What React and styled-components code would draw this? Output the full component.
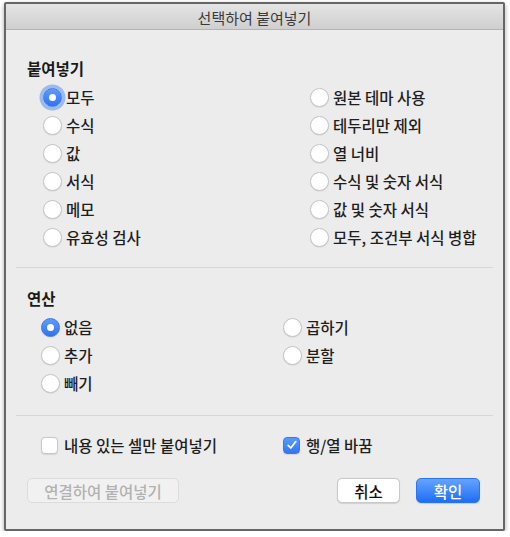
import React from 'react';
import styled, { createGlobalStyle, css } from 'styled-components';

const Global = createGlobalStyle`
  html, body {
    margin: 0;
    padding: 0;
    background: #ffffff;
  }
  body {
    font-family: "Noto Sans CJK KR", "Noto Sans", sans-serif;
    color: #222;
  }
`;

const pasteLeft = ['모두', '수식', '값', '서식', '메모', '유효성 검사'];
const pasteRight = ['원본 테마 사용', '테두리만 제외', '열 너비', '수식 및 숫자 서식', '값 및 숫자 서식', '모두, 조건부 서식 병합'];

const Radio = ({ label, checked, focused }) => (
  <Option>
    <Circle $checked={checked} $focused={focused} />
    <Label>{label}</Label>
  </Option>
);

const Check = ({ label, checked }) => (
  <Option>
    <Box $checked={checked}>
      {checked && (
        <svg width="12" height="12" viewBox="0 0 12 12">
          <path d="M2.2 6.4 L4.8 9 L9.8 2.6" fill="none" stroke="#fff" strokeWidth="1.7" strokeLinecap="round" strokeLinejoin="round" />
        </svg>
      )}
    </Box>
    <Label>{label}</Label>
  </Option>
);

const App = () => {
  return (
    <>
      <Global />
      <Window>
        <TitleBar>선택하여 붙여넣기</TitleBar>
        <Body>
          <Section $top={28} $bottom={16}>
            <Heading>붙여넣기</Heading>
            <Grid $indent={16} $col={267}>
              <Column>
                {pasteLeft.map((l, i) => (
                  <Radio key={l} label={l} checked={i === 0} focused={i === 0} />
                ))}
              </Column>
              <Column>
                {pasteRight.map((l) => (
                  <Radio key={l} label={l} />
                ))}
              </Column>
            </Grid>
          </Section>
          <Divider />
          <Section $top={20} $bottom={18}>
            <Heading>연산</Heading>
            <Grid $indent={14} $col={242}>
              <Column>
                <Radio label="없음" checked />
                <Radio label="추가" />
                <Radio label="빼기" />
              </Column>
              <Column>
                <Radio label="곱하기" />
                <Radio label="분할" />
              </Column>
            </Grid>
          </Section>
          <Divider />
          <Section $top={15} $bottom={0}>
            <Grid $indent={14} $col={242} $flat>
              <Check label="내용 있는 셀만 붙여넣기" />
              <Check label="행/열 바꿈" checked />
            </Grid>
          </Section>
          <Buttons>
            <Button $kind="disabled">연결하여 붙여넣기</Button>
            <Spacer />
            <Button $kind="plain" $w={63}>취소</Button>
            <Button $kind="primary" $w={64}>확인</Button>
          </Buttons>
        </Body>
      </Window>
    </>
  );
};

export default App;

const Window = styled.div`
  margin: 2px 0 0 4px;
  width: 501px;
  height: 529px;
  box-sizing: border-box;
  border: 2px solid #666;
  border-radius: 2px;
  background: #ececec;
  box-shadow: 0 2px 5px rgba(0, 0, 0, 0.35);
  display: flex;
  flex-direction: column;
  overflow: hidden;
`;

const TitleBar = styled.div`
  height: 26px;
  box-sizing: border-box;
  border-bottom: 1px solid #b4b4b4;
  background: linear-gradient(#e4e4e4, #cfcfcf);
  display: flex;
  align-items: center;
  justify-content: center;
  font-size: 15px;
  color: #3a3a3a;
  padding-top: 1px;
`;

const Body = styled.div`
  padding: 0 10px;
  display: flex;
  flex-direction: column;
`;

const Section = styled.div`
  padding: ${(p) => p.$top}px 0 ${(p) => p.$bottom}px 11px;
`;

const Heading = styled.div`
  font-size: 15.5px;
  font-weight: 700;
  line-height: 20px;
  height: 20px;
  margin-bottom: 5px;
  color: #1a1a1a;
`;

const Grid = styled.div`
  display: grid;
  grid-template-columns: ${(p) => p.$col}px 1fr;
  padding-left: ${(p) => p.$indent}px;
  ${(p) => p.$flat && css`align-items: center;`}
`;

const Column = styled.div`
  display: flex;
  flex-direction: column;
`;

const Option = styled.div`
  height: 28px;
  display: flex;
  align-items: center;
  gap: 4px;
`;

const Label = styled.span`
  font-size: 15.5px;
  font-weight: 500;
  color: #1e1e1e;
  line-height: 20px;
  white-space: nowrap;
`;

const Circle = styled.span`
  width: 19px;
  height: 19px;
  box-sizing: border-box;
  border-radius: 50%;
  flex-shrink: 0;
  position: relative;
  background: #fff;
  border: 1px solid #c6c6c6;
  box-shadow: 0 0.5px 1px rgba(0, 0, 0, 0.12);
  ${(p) =>
    p.$checked &&
    css`
      background: linear-gradient(#5f9bfa, #2f73f2);
      border: 1px solid #3a78ee;
      &::after {
        content: '';
        position: absolute;
        left: 50%;
        top: 50%;
        width: 7px;
        height: 7px;
        margin: -3.5px 0 0 -3.5px;
        border-radius: 50%;
        background: #fff;
      }
    `}
  ${(p) =>
    p.$focused &&
    css`
      box-shadow: 0 0 0 3.5px rgba(90, 145, 240, 0.55);
    `}
`;

const Box = styled.span`
  width: 17px;
  height: 17px;
  box-sizing: border-box;
  border-radius: 4px;
  flex-shrink: 0;
  display: flex;
  align-items: center;
  justify-content: center;
  margin-right: 2px;
  background: #fff;
  border: 1px solid #c8c8c8;
  box-shadow: 0 0.5px 1px rgba(0, 0, 0, 0.1);
  ${(p) =>
    p.$checked &&
    css`
      background: linear-gradient(#5b98fa, #3276f2);
      border-color: #3a78ee;
    `}
`;

const Divider = styled.div`
  height: 1px;
  background: #d6d6d6;
`;

const Buttons = styled.div`
  display: flex;
  align-items: center;
  gap: 16px;
  padding: 19px 13px 0 11px;
`;

const Spacer = styled.div`
  flex: 1;
`;

const Button = styled.div`
  height: 25px;
  box-sizing: border-box;
  border-radius: 5px;
  display: flex;
  align-items: center;
  justify-content: center;
  font-size: 15.5px;
  font-weight: 500;
  ${(p) => p.$w && css`width: ${p.$w}px;`}
  ${(p) =>
    p.$kind === 'disabled' &&
    css`
      width: 152px;
      background: #f1f1f1;
      border: 1px solid #dcdcdc;
      color: #b2b2b2;
    `}
  ${(p) =>
    p.$kind === 'plain' &&
    css`
      background: #fff;
      border: 1px solid #c9c9c9;
      color: #111;
      box-shadow: 0 0.5px 1px rgba(0, 0, 0, 0.12);
    `}
  ${(p) =>
    p.$kind === 'primary' &&
    css`
      background: linear-gradient(#66a3fd, #1e6ef5);
      border: 1px solid #2c74ee;
      color: #fff;
      box-shadow: 0 0.5px 1px rgba(0, 0, 0, 0.15);
    `}
`;
